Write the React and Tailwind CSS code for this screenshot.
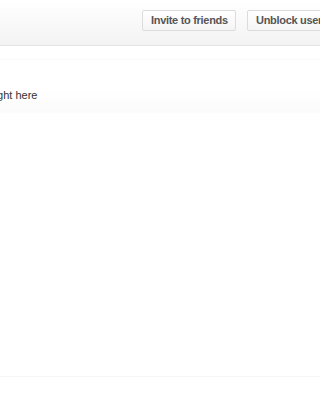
import React from 'react';

function ToolbarButton({ children, className = '' }) {
  return (
    <button
      type="button"
      className={`h-[21px] shrink-0 whitespace-nowrap rounded-[2px] border border-[#dcdcdc] bg-gradient-to-b from-white to-[#f5f5f5] pl-[8px] pr-[6px] text-left text-[11px] font-bold leading-none tracking-[-0.3px] text-[#555] ${className}`}
    >
      {children}
    </button>
  );
}

export default function App() {
  return (
    <div className="h-[400px] w-[320px] overflow-hidden bg-white font-['Liberation_Sans',Arial,sans-serif]">
      {/* header toolbar */}
      <div className="h-[46px] border-b border-[#e4e4e4] bg-gradient-to-b from-white to-[#f3f3f3]">
        <div className="flex gap-[11px] pl-[142px] pt-[10px]">
          <ToolbarButton className="w-[94px]">Invite to friends</ToolbarButton>
          <ToolbarButton>Unblock user</ToolbarButton>
        </div>
      </div>

      {/* empty state */}
      <div className="mt-[13px] h-[54px] border-t border-[#f8f8f8] bg-gradient-to-b from-white via-white to-[#fbfbfb]">
        <p className="-ml-[50px] whitespace-nowrap pt-[28px] text-[11px] leading-[14px] text-[#333]">
          Nothing right here
        </p>
      </div>

      <div className="h-[263px]" />
      <div className="border-t border-[#f6f6f6]" />
    </div>
  );
}
